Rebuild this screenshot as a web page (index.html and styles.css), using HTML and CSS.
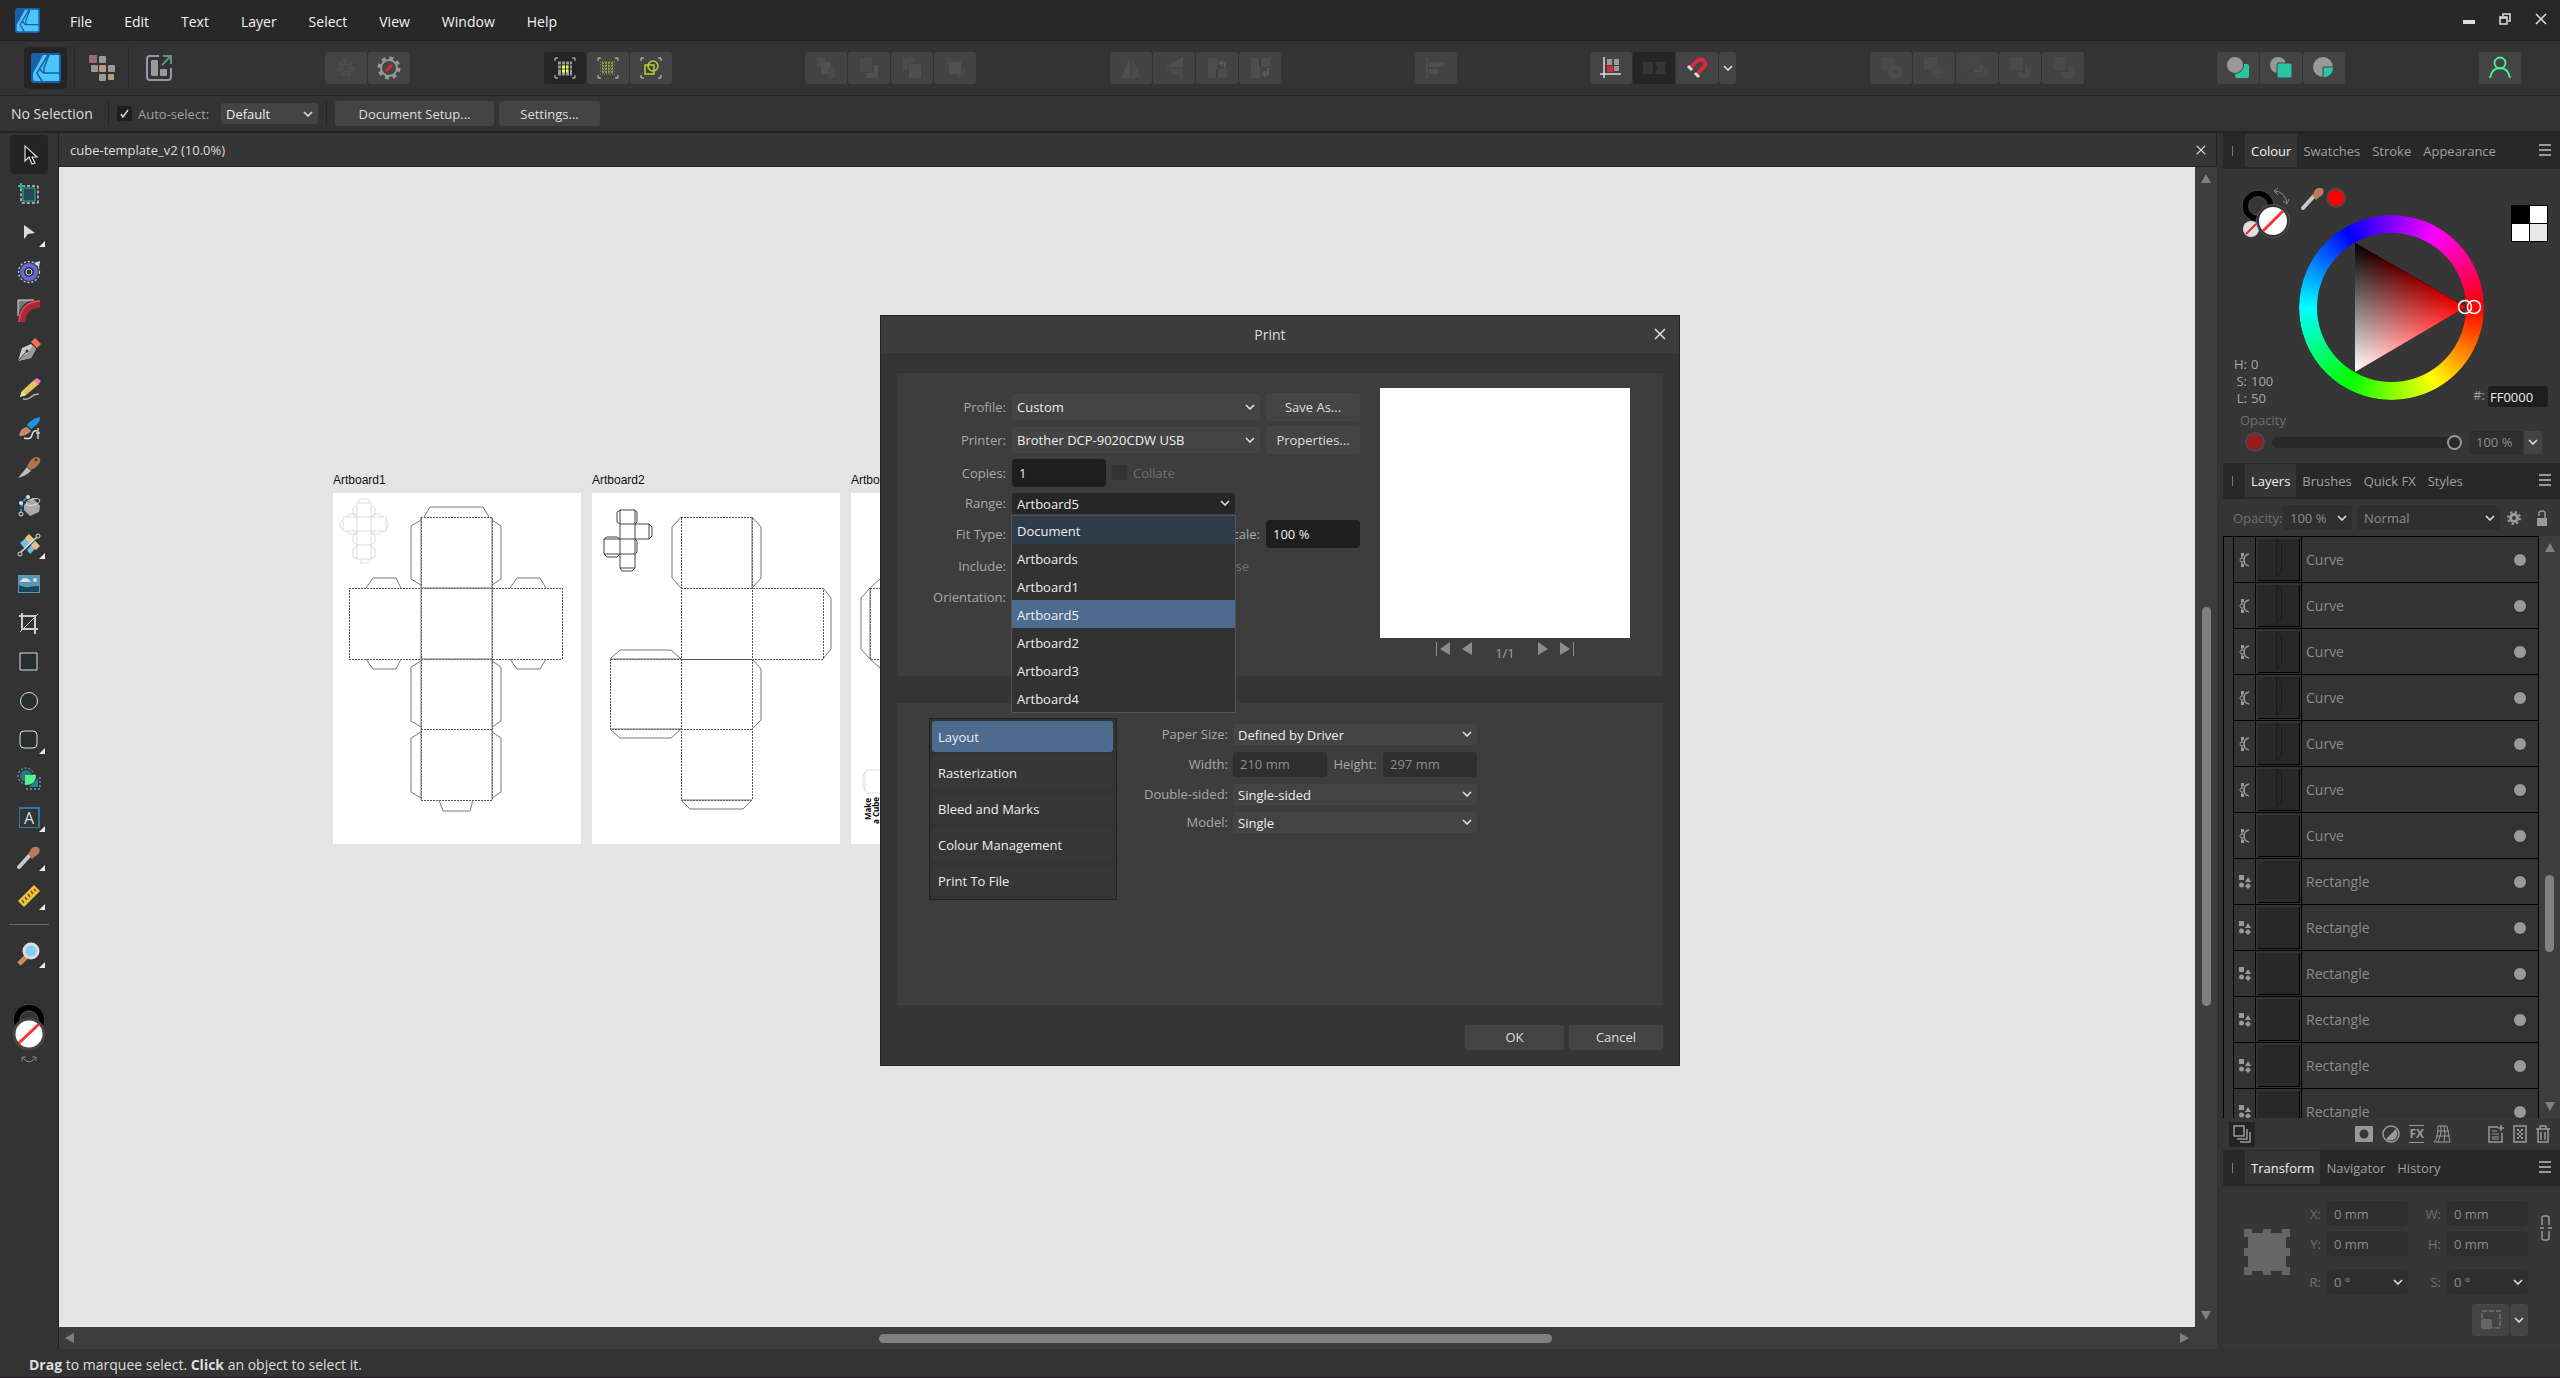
FILE: index.html
```html
<!DOCTYPE html>
<html lang="en">
<head>
  <meta charset="UTF-8" />
  <meta name="viewport" content="width=device-width, initial-scale=1" />
  <title>cube-template_v2 - Print</title>
  <link rel="stylesheet" href="styles.css">
</head>
<body>

  <!-- shared icons -->
  <svg class="defs" aria-hidden="true">
    <symbol id="logo" viewBox="0 0 30 30">
      <rect width="30" height="30" rx="3" fill="#1b5fa9"/>
      <path d="M12 2h15q1 0 1 1v24q0 1-1 1H4q-2 0-2-2v-6z" fill="#4ac6fb"/>
      <path d="M2 2h9L2 19z" fill="#1b5fa9"/>
      <path d="M17 2 6 20l5 8M9 16l3 4M12 20h16M18 2l-5 13v5" fill="none" stroke="#1b5fa9" stroke-width="1.500"/>
    </symbol>
    <symbol id="dropper" viewBox="0 0 24 24">
      <path d="M2 22 13 10" stroke="#c9c9c9" stroke-width="4" stroke-linecap="round"/>
      <path d="M11 9q2-2 3-5 4-4 8-1 2 4-2 7-3 2-5 4z" fill="#bb7a5b"/>
    </symbol>
    <symbol id="curve" viewBox="0 0 14 14">
      <path d="M4 1v12M11 1Q6 2 6 7t5 6M4 7h3" fill="none" stroke="#999" stroke-width="1.400"/>
      <path d="M3 0h3v3H3zM3 11h3v3H3z" fill="#999"/>
      <circle cx="4" cy="7" r="2" fill="#333" stroke="#999"/>
    </symbol>
    <symbol id="shapes" viewBox="0 0 14 14">
      <path d="M1 0h5v5H1zM10 2l3 5H7z" fill="#999"/>
      <circle cx="3.500" cy="10" r="2.500" fill="#999"/>
      <path d="m10 8 3 3-3 3-3-3z" fill="#999"/>
    </symbol>
    <symbol id="close" viewBox="0 0 12 12">
      <path d="m1 1 10 10M11 1 1 11" stroke="#e0e0e0" stroke-width="1.500"/>
    </symbol>
    <symbol id="menu" viewBox="0 0 12 12">
      <path d="M0 1h12M0 6h12M0 11h12" stroke="#999" stroke-width="2"/>
    </symbol>
    <symbol id="chev" viewBox="0 0 10 6">
      <path d="m1 1 4 4 4-4" fill="none" stroke="#ddd" stroke-width="1.600"/>
    </symbol>
    <symbol id="flapright" viewBox="0 0 42 42">
      <path d="M18 0v39l5-5V5z" fill="none" stroke="#1b1b1b"/>
    </symbol>
  </svg>

  <header class="menubar">
    <svg class="app-logo"><use href="#logo"/></svg>
    <nav class="menus">
      <a href="#">File</a>
      <a href="#">Edit</a>
      <a href="#">Text</a>
      <a href="#">Layer</a>
      <a href="#">Select</a>
      <a href="#">View</a>
      <a href="#">Window</a>
      <a href="#">Help</a>
    </nav>
    <div class="window-buttons">
      <button aria-label="Minimise"><svg width="12" height="12"><path d="M0 9h12" stroke="#ddd" stroke-width="4"/></svg></button>
      <button aria-label="Restore"><svg width="12" height="12" fill="none" stroke="#ddd" stroke-width="1.500"><path d="M1 4h7v7H1zM1 5h7M4 3V1h7v7H9M4 1h7"/></svg></button>
      <button aria-label="Close"><svg width="12" height="12"><use href="#close"/></svg></button>
    </div>
  </header>

  <div class="toolbar">
    <div class="personas">
      <button class="active" aria-label="Designer"><svg width="30" height="30"><use href="#logo"/></svg></button>
      <button aria-label="Pixel">
        <svg width="26" height="26">
          <rect width="8" height="8" rx="1" fill="#9d6b70"/><rect x="10" y="1" width="7" height="7" rx="1" fill="#999"/>
          <rect x="2" y="10" width="7" height="7" rx="1" fill="#999"/><rect x="10" y="10" width="7" height="7" rx="1" fill="#b79b7c"/><rect x="19" y="10" width="7" height="7" rx="1" fill="#999"/>
          <rect x="10" y="19" width="7" height="7" rx="1" fill="#999"/><rect x="19" y="19" width="6" height="6" rx="1" fill="#b0a379"/>
        </svg>
      </button>
      <button aria-label="Export">
        <svg width="26" height="26">
          <path d="M13 1H4Q1 1 1 4v18q0 3 3 3h18q3 0 3-3v-9" fill="none" stroke="#9295b3" stroke-width="2"/>
          <rect x="5" y="5" width="7" height="16" rx="1" fill="#999"/><rect x="14" y="14" width="7" height="7" rx="1" fill="#999"/>
          <path d="m16 10 8-8M17 1h8v8" fill="none" stroke="#5e9485" stroke-width="2"/>
        </svg>
      </button>
    </div>

    <div class="groups">
      <div class="group">
        <button aria-label="Defaults"><svg width="24" height="24" fill="none" stroke="#4d4d4d"><circle cx="12" cy="12" r="7" stroke-width="4" stroke-dasharray="4 2"/><circle cx="12" cy="12" r="4" stroke-width="2"/></svg></button>
        <button aria-label="Revert defaults"><svg width="24" height="24" fill="none" stroke="#999"><circle cx="12" cy="12" r="8" stroke-width="2"/><circle cx="12" cy="12" r="10" stroke-width="3" stroke-dasharray="4 3.854"/><path d="m9 15 6-6" stroke="#e0263f" stroke-width="3"/></svg></button>
      </div>
      <div class="group">
        <button class="on" aria-label="Snap to grid"><svg width="22" height="22" fill="none"><path d="M1 4V1h3M18 1h3v3M21 18v3h-3M4 21H1v-3" stroke="#ccc"/><path d="M4 6h14M4 10h14M4 14h14M4 17h14" stroke="#999" stroke-width="3" stroke-dasharray="3 1"/><path d="M8 10h6M8 14h6" stroke="#e6ff2e" stroke-width="3" stroke-dasharray="3 1"/></svg></button>
        <button aria-label="Pixel alignment"><svg width="22" height="22" fill="none"><path d="M1 4V1h3M18 1h3v3M21 18v3h-3M4 21H1v-3" stroke="#ccc"/><path d="M3 5h16M3 8h16M3 11h16M3 14h16M3 17h16" stroke="#888" stroke-width="1" stroke-dasharray="1 1"/><path d="M5 6h12M5 9h12M5 12h12M5 15h12" stroke="#c7e12d" stroke-dasharray="2 1"/></svg></button>
        <button aria-label="Move by whole pixels"><svg width="22" height="22" fill="none"><path d="M1 4V1h3M18 1h3v3M21 18v3h-3M4 21H1v-3" stroke="#ccc"/><path d="M5 8h9v9H5z" stroke="#b8cf30" stroke-width="1.500"/><circle cx="13" cy="9" r="5" stroke="#b8cf30" stroke-width="1.500"/></svg></button>
      </div>
      <div class="group dim">
        <button aria-label="Move to back"><svg width="22" height="22"><path d="M2 1h8v8H2z" fill="#4b4b4b"/><path d="M6 5h10v6h-3v6H6z" fill="#515151"/><path d="M13 12h7v9h-7z" fill="#4b4b4b"/></svg></button>
        <button aria-label="Back one"><svg width="22" height="22"><path d="M2 1h12v14H2z" fill="#4b4b4b"/><path d="M16 8h4v13H9v-5h7z" fill="#515151"/></svg></button>
        <button aria-label="Forward one"><svg width="22" height="22"><path d="M2 1h12v5H7v7H2z" fill="#4b4b4b"/><path d="M8 7h12v14H8z" fill="#505050"/></svg></button>
        <button aria-label="Move to front"><svg width="22" height="22"><path d="M2 1h7v8H2zM14 12h7v9h-7z" fill="#484848"/><path d="M5 5h12v12H5z" fill="#515151"/></svg></button>
      </div>
      <div class="group dim">
        <button aria-label="Flip horizontal"><svg width="22" height="22"><path d="M10 1v20H1z" fill="#505050"/><path d="M12 1v20h9z" fill="#4b4b4b"/></svg></button>
        <button aria-label="Flip vertical"><svg width="22" height="22"><path d="M20 0v10H2z" fill="#505050"/><path d="M20 21v-9H2z" fill="#4b4b4b"/></svg></button>
        <button aria-label="Rotate left"><svg width="22" height="22"><path d="M2 1h9v20H2zM12 12h9v9h-9z" fill="#4d4d4d"/><path d="M11 12v9" stroke="#333"/><path d="M19 11V6h-5m3-3-3 3 3 3" fill="none" stroke="#5d5d5d" stroke-width="1.500"/></svg></button>
        <button aria-label="Rotate right"><svg width="22" height="22"><path d="M2 1h9v20H2zM12 1h9v9h-9z" fill="#4d4d4d"/><path d="M11 1v9" stroke="#333"/><path d="M19 11v6h-5m3-3-3 3 3 3" fill="none" stroke="#5d5d5d" stroke-width="1.500"/></svg></button>
      </div>
      <div class="group dim">
        <button aria-label="Alignment"><svg width="22" height="22"><path d="M2 1v20" stroke="#4d4d4d" stroke-width="2"/><path d="M4 5h15v5H4zM4 12h10v5H4z" fill="#505050"/></svg></button>
      </div>
      <div class="group">
        <button aria-label="Show grid"><svg width="22" height="22"><path d="M7 2h5v6H7zM14 2h5v6h-5zM14 9h5v5h-5z" fill="#999"/><path d="M7 9h6v6H7z" fill="#e0263f"/><path d="M4 0v21M0 17h21" stroke="#ddd" stroke-width="1.500"/></svg></button>
        <button class="on" aria-label="Preview"><svg width="22" height="12"><path d="M0 0h10v12H0zM11 0h11v12H11l4-6z" fill="#363636"/></svg></button>
        <button class="joined" aria-label="Snapping"><svg width="22" height="22" fill="none"><path d="m5 10 6-6q4-3 7 0 3 4-1 7l-5 5" stroke="#e0263f" stroke-width="4"/><path d="m2 9 4 4M9 16l4 4" stroke="#ddd" stroke-width="3"/></svg></button>
        <button class="thin" aria-label="Snapping options"><svg width="10" height="6"><use href="#chev"/></svg></button>
      </div>
      <div class="group dim">
        <button aria-label="Add"><svg width="24" height="24"><path d="M2 1h13v13H2z" fill="#494949"/><circle cx="16" cy="16" r="7" fill="#4c4c4c"/><path d="M16 13v6M13 16h6" stroke="#424242"/></svg></button>
        <button aria-label="Subtract"><svg width="24" height="24"><path d="M2 1h13v13H2z" fill="#4b4b4b"/><circle cx="16" cy="16" r="7" fill="#484848"/><path d="M13 16h6" stroke="#515151"/></svg></button>
        <button aria-label="Intersect"><svg width="24" height="24"><path d="M2 1h13v13H2z" fill="#464646"/><circle cx="16" cy="16" r="7" fill="#474747"/><path d="M16 9v6H9" fill="none" stroke="#505050" stroke-width="2"/></svg></button>
        <button aria-label="Xor"><svg width="24" height="24"><path d="M2 1h13v13H2z" fill="#4a4a4a"/><circle cx="16" cy="16" r="7" fill="#4b4b4b"/><path d="M16 9v6H9" fill="none" stroke="#404040" stroke-width="2"/></svg></button>
        <button aria-label="Divide"><svg width="24" height="24"><path d="M2 1h13v13H2z" fill="#4a4a4a"/><circle cx="16" cy="16" r="7" fill="#4a4a4a"/><path d="M16 9v6H9" fill="none" stroke="#404040" stroke-width="2"/></svg></button>
      </div>
      <div class="group">
        <button aria-label="Insert behind"><svg width="24" height="24"><rect x="9" y="8" width="14" height="14" rx="2" fill="#2bc4a4"/><circle cx="9" cy="9" r="8.500" fill="#999" stroke="#444"/></svg></button>
        <button aria-label="Insert in front"><svg width="24" height="24"><circle cx="9" cy="9" r="8" fill="#999"/><rect x="8" y="7" width="15" height="15" rx="2" fill="#2bc4a4" stroke="#444"/></svg></button>
        <button aria-label="Insert inside"><svg width="24" height="24"><circle cx="11" cy="11" r="10" fill="#999"/><path d="M11 22V11h11q-1 10-11 11z" fill="#2bc4a4" stroke="#444"/></svg></button>
      </div>
      <div class="group">
        <button aria-label="Account"><svg width="24" height="24" fill="none" stroke="#4af295" stroke-width="1.800"><circle cx="12" cy="7" r="5.500"/><path d="M2 22q2-10 10-10t10 10"/></svg></button>
      </div>
    </div>
  </div>

  <div class="context">
    <span class="selection">No Selection</span>
    <span class="sep"></span>
    <input type="checkbox" id="autoSelect" checked>
    <label for="autoSelect">Auto-select:</label>
    <select class="auto" aria-label="Auto-select mode"><option>Default</option></select>
    <span class="sep"></span>
    <button class="btn setup">Document Setup...</button>
    <button class="btn settings">Settings...</button>
  </div>

  <div class="workspace">
    <aside class="tools">
      <button class="active" aria-label="Move"><svg width="24" height="24"><path d="M8 3v15l4-4 3 7 3-1-3-6h5z" fill="#111" stroke="#ddd" stroke-width="1.200"/></svg></button>
      <button aria-label="Artboard"><svg width="24" height="24" fill="none"><rect x="4" y="4" width="17" height="17" rx="1" stroke="#ccc" stroke-width="1.500" stroke-dasharray="3 2"/><path d="M6 6h12v13H6z" fill="#1f4a56" stroke="#2bb59a"/><path d="M1 4h6M4 1v6" stroke="#2bb59a" stroke-width="2"/></svg></button>
      <button class="more" aria-label="Node"><svg width="24" height="24"><path d="m7 4 11 8-7 1-4 5z" fill="#ddd"/></svg></button>
      <button aria-label="Contour"><svg width="24" height="24" fill="none"><circle cx="12" cy="12" r="7" stroke="#5e6bdb" stroke-width="4"/><circle cx="12" cy="12" r="3" stroke="#ddd"/><circle cx="12" cy="12" r="10.500" stroke="#ccc" stroke-width="1.300" stroke-dasharray="2 2"/><path d="m17 3 6-2-1 6z" fill="#ddd"/></svg></button>
      <button aria-label="Corner"><svg width="24" height="24" fill="none"><path d="M1 1h16Q4 3 1 17z" fill="#777"/><path d="M1 17V1h16" stroke="#ddd"/><path d="M5 23Q6 6 23 5" stroke="#a8273a" stroke-width="7"/><path d="M2 23Q3 3 23 2" stroke="#f04a5c" stroke-width="1.500"/></svg></button>
      <button aria-label="Pen"><svg width="24" height="24"><path d="M1 23 5 10l9-4 5 5-5 9z" fill="#ccc"/><path d="m1 23 13-3 5-9-3-3-6 7z" fill="#999"/><path d="m1 23 8-9" stroke="#333"/><circle cx="10" cy="13" r="1.500" fill="#333"/><path d="m14 4 4-4 6 6-4 4z" fill="#ff6a55"/></svg></button>
      <button aria-label="Pencil"><svg width="24" height="24" fill="none"><path d="M6 22q5 1 8-2t8-3" stroke="#aaa" stroke-width="1.500"/><path d="m3 20 2-6L17 3l5 4L9 18z" fill="#e2c45a"/><path d="m3 20 2-6 4 4z" fill="#f0dca6"/><path d="m17 3 3-2 4 3-3 4z" fill="#ee7fc8"/></svg></button>
      <button aria-label="Vector brush"><svg width="24" height="24" fill="none"><path d="M7 22q7 2 8-3t5-4" stroke="#ddd" stroke-width="1.500"/><path d="M21 12v11M19 17h4" stroke="#ccc" stroke-width="1.500"/><path d="M10 9Q15 2 23 1q1 6-9 12z" fill="#1d94e0"/><path d="M2 20q1-8 8-9l4 4q-4 5-12 5z" fill="#c18b72"/></svg></button>
      <button aria-label="Knife"><svg width="24" height="24"><path d="M1 23 10 12l4 4q-5 5-13 7z" fill="#bbb"/><path d="M10 11q5-10 11-9 4 2 1 7-3 4-8 6z" fill="#b2714f"/><circle cx="19" cy="5" r="1.300" fill="#333"/></svg></button>
      <button aria-label="Fill"><svg width="24" height="24" fill="none"><path d="M4 19q0-14 8-16" stroke="#1d8fd6" stroke-width="2" stroke-dasharray="4 2"/><path d="m7 11 9-7 7 8-1 6-9 4-6-6z" fill="#aaa"/><ellipse cx="16" cy="8" rx="7" ry="3" transform="rotate(-15 16 8)" stroke="#ddd"/><circle cx="4" cy="20" r="2" stroke="#ddd"/><circle cx="4" cy="9" r="2" fill="#ddd"/><circle cx="11" cy="3" r="2" fill="#ddd"/></svg></button>
      <button class="more" aria-label="Gradient"><svg width="24" height="24" fill="none"><path d="m3 10 9-8 5 5-9 9zM10 17l8-9 4 4-9 9z" fill="#74bfe0"/><path d="m8 5 4-4 5 5-4 5zM14 12l4-4 5 5-4 4z" fill="#e7bf8c"/><path d="m3 20 17-16" stroke="#ddd" stroke-width="1.500"/><circle cx="3" cy="21" r="2" stroke="#ddd" fill="#333"/><circle cx="21" cy="3" r="2" stroke="#ddd" fill="#333"/></svg></button>
      <button aria-label="Place image"><svg width="24" height="24"><rect x="1" y="3" width="22" height="18" fill="#5b97b8"/><path d="M2 13q6 3 10 2t10-1v6H2z" fill="#17485a"/><path d="M3 10q2-4 5-4t6 4z" fill="#ddd"/><circle cx="18" cy="8" r="2" fill="#ddd"/></svg></button>
      <button aria-label="Crop"><svg width="24" height="24" fill="none" stroke="#ccc" stroke-width="2"><path d="M5 2v16h16M2 5h16v18"/><path d="M3 21 21 3" stroke-width="1"/></svg></button>
      <button aria-label="Rectangle"><svg width="24" height="24"><path d="M3 3h17v17H3z" fill="#272e30" stroke="#ddd"/></svg></button>
      <button aria-label="Ellipse"><svg width="24" height="24"><circle cx="12" cy="12" r="8.500" fill="#272e30" stroke="#ddd"/></svg></button>
      <button class="more" aria-label="Rounded rectangle"><svg width="24" height="24"><rect x="3" y="3" width="17" height="17" rx="4" fill="#272e30" stroke="#ddd"/></svg></button>
      <button aria-label="Shape builder"><svg width="24" height="24" fill="none"><circle cx="9" cy="9" r="6" fill="#2b7582"/><path d="M21 11v9h-9z" fill="#2b8091"/><path d="M8 8h11q0 10-11 10z" fill="#53f58f"/><circle cx="9" cy="9" r="8" stroke="#7fd0ee" stroke-dasharray="2 2"/><path d="M9 22h14V8" stroke="#7fd0ee" stroke-dasharray="2 2"/></svg></button>
      <button class="more text-tool" aria-label="Text">A</button>
      <button class="more" aria-label="Colour picker"><svg width="24" height="24"><use href="#dropper"/></svg></button>
      <button class="more" aria-label="Measure"><svg width="24" height="24"><path d="M1 17 17 1l6 6L7 23z" fill="#efc43c"/><path d="m5 16 2 3M8 13l2 3M11 10l2 3M14 7l2 3M17 5l2 2" stroke="#6b5010" stroke-width="1.500"/></svg></button>
      <hr>
      <button class="more" aria-label="Zoom"><svg width="24" height="24"><path d="m2 22 7-7" stroke="#c98f62" stroke-width="5"/><circle cx="14" cy="9" r="7" fill="#86cdf6" stroke="#ddd" stroke-width="3"/></svg></button>
      <svg class="tool-colours" width="38" height="64" fill="none">
        <circle cx="19" cy="19" r="13" stroke="#000" stroke-width="7"/><circle cx="19" cy="19" r="16" stroke="#555"/><circle cx="19" cy="19" r="9" stroke="#555"/>
        <circle cx="19" cy="33" r="15" fill="#fff" stroke="#444" stroke-width="3"/><path d="m9 42 20-19" stroke="#f33" stroke-width="3"/>
        <path d="M13 57q6 8 12 0M12 60v-4h4M22 56h4v4" stroke="#888"/>
      </svg>
    </aside>

    <main class="document">
      <div class="doc-tab">
        <span>cube-template_v2 (10.0%)</span>
        <button aria-label="Close document"><svg width="10" height="10"><use href="#close"/></svg></button>
      </div>
      <div class="canvas">
        <figure class="artboard">
          <figcaption>Artboard1</figcaption>
          <svg viewBox="0 0 248 351">
            <g class="fold">
              <path d="M88 24h71v283H88zM16 95h213v71H16zM88 236h71"/>
            </g>
            <g class="cut">
              <path d="M91 24l6-10h53l6 10M88 27l-10 6v53l10 6M159 27l9 6v53l-9 6"/>
              <path d="M33 95l7-10h23l5 10M177 95l7-10h23l6 10M33 166l7 10h23l5-10M177 166l7 10h23l6-10"/>
              <path d="M88 168l-10 6v54l10 6M159 168l9 6v54l-9 6M88 239l-10 6v54l10 6M159 239l9 6v54l-9 6M106 307l4 11h27l3-11"/>
              <path d="M88 95h71M88 166h71M88 24v283M159 24v283"/>
            </g>
            <path class="mini-light" d="M24 10h14v56H24zM10 24h43v14H10zM24 52h14M25 10l2-4h8l2 4M24 12l-4 3v6l4 3M38 12l4 3v6l-4 3M10 27l-3 2v5l3 2M53 27l2 2v5l-2 2M14 24l2-3h6l2 3M39 24l2-3h6l2 3M14 38l2 3h6l2-3M39 38l2 3h6l2-3M24 40l-4 3v6l4 3M38 40l4 3v6l-4 3M24 53l-4 3v8l4 2M38 53l4 3v8l-4 2M27 66l1 4h6l2-4"/>
          </svg>
        </figure>
        <figure class="artboard">
          <figcaption>Artboard2</figcaption>
          <svg viewBox="0 0 248 351">
            <g class="fold">
              <path d="M89 24h71v283H89zM89 95h142v71H18M18 166v70h142M89 166h71"/>
            </g>
            <g class="cut">
              <path d="M89 24l-9 10v51l9 10M160 24l9 10v51l-9 10M231 95l8 10v51l-8 10M160 166l9 10v51l-9 9"/>
              <path d="M18 166l10-9h51l10 9M18 236l10 9h51l10-9M89 307l9 9h53l9-9"/>
              <path d="M18 166h71M18 236h71M160 24v71M89 307h71"/>
            </g>
            <path class="mini" d="M28 17h15v58H28zM28 31h29v15H12M12 46v15h31M29 17l-4 2v10l3 2M42 17l3 2v10l-2 2M57 31l3 3v9l-3 3M12 46l3-2h10l3 2M12 61l3 3h10l3-3M43 46l2 2v11l-2 2M28 75l2 3h10l3-3"/>
          </svg>
        </figure>
        <figure class="artboard">
          <figcaption>Artboard3</figcaption>
          <svg viewBox="0 0 248 351">
            <path class="fold" d="M19 95h71v71H19z"/>
            <path class="cut" d="M19 95l-9 10v51l9 10zM19 95l10-9h51l10 9M19 166l10 9h51l10-9"/>
            <path class="mini-light" d="M30 277H16l-4 5v12l4 6h14M14 279v19"/>
            <text class="cube-text" transform="rotate(-90)" x="-327" y="20">Make</text>
            <text class="cube-text" transform="rotate(-90)" x="-331" y="28">a Cube</text>
          </svg>
        </figure>
      </div>
      <div class="scroll vertical">
        <i class="arrow up"></i><span class="v-before"></span><span class="thumb v-thumb"></span><span class="v-after"></span><i class="arrow down"></i>
      </div>
      <div class="scroll horizontal">
        <i class="arrow left"></i><span class="h-before"></span><span class="thumb h-thumb"></span><span class="h-after"></span><i class="arrow right"></i>
      </div>
    </main>

    <aside class="panels">
      <div class="tabs">
        <i class="grip"></i>
        <button class="active">Colour</button><button>Swatches</button><button>Stroke</button><button>Appearance</button>
        <svg class="tab-menu"><use href="#menu"/></svg>
      </div>
      <section class="colour">
        <div class="colour-main">
          <div class="colour-left">
            <svg width="52" height="52" fill="none">
              <circle cx="19" cy="20" r="13" stroke="#000" stroke-width="6"/><circle cx="19" cy="20" r="16" stroke="#4a4a4a"/><circle cx="19" cy="20" r="9" stroke="#4a4a4a"/>
              <circle cx="12" cy="43" r="8" fill="#ddd"/><path d="m7 48 10-10" stroke="#e0263f" stroke-width="2"/>
              <circle cx="34" cy="35" r="15" fill="#fff" stroke="#333" stroke-width="2"/><circle cx="34" cy="35" r="16.500" stroke="#555"/><path d="m24 45 20-20" stroke="#f33" stroke-width="3"/>
              <path d="M36 5q10 1 12 12M39 2l-4 3 4 4M44 15l4 3 2-5" stroke="#888"/>
            </svg>
            <dl class="hsl">
              <dt>H:</dt><dd>0</dd>
              <dt>S:</dt><dd>100</dd>
              <dt>L:</dt><dd>50</dd>
            </dl>
          </div>
          <div class="colour-mid">
            <div class="picker">
              <svg width="24" height="24"><use href="#dropper"/></svg>
              <span class="dot"></span>
            </div>
            <div class="wheel">
              <div class="ring"></div>
              <svg class="triangle" width="185" height="185">
                <defs>
                  <linearGradient id="toRed" gradientUnits="userSpaceOnUse" x1="56" y1="92" x2="167" y2="92"><stop offset="0" stop-color="#000"/><stop offset="1" stop-color="#f00"/></linearGradient>
                  <linearGradient id="toWhite" gradientUnits="userSpaceOnUse" x1="111" y1="60" x2="56" y2="156"><stop offset="0" stop-color="#000"/><stop offset="1" stop-color="#fff"/></linearGradient>
                </defs>
                <g class="mix">
                  <path d="M56 28v129l111-65z" fill="url(#toRed)"/>
                  <path class="light" d="M56 28v129l111-65z" fill="url(#toWhite)"/>
                </g>
                <circle cx="166" cy="92" r="6.500" fill="none" stroke="#fff" stroke-width="1.500"/>
                <circle cx="175" cy="92" r="6.500" fill="none" stroke="#fff" stroke-width="1.500"/>
              </svg>
            </div>
          </div>
          <div class="colour-right">
            <div class="palette"><i class="black"></i><i></i><i></i><i class="grey"></i></div>
            <div class="hex"><label for="hex">#:</label><input type="text" id="hex" value="FF0000"></div>
          </div>
        </div>
        <label class="opacity-label" for="opacity">Opacity</label>
        <div class="opacity-row">
          <span class="dot dark"></span>
          <input type="range" id="opacity" value="100">
          <div class="split"><input type="text" value="100 %" aria-label="Opacity value"><button aria-label="Opacity list"><svg width="10" height="6"><use href="#chev"/></svg></button></div>
        </div>
      </section>

      <div class="tabs">
        <i class="grip"></i>
        <button class="active">Layers</button><button>Brushes</button><button>Quick FX</button><button>Styles</button>
        <svg class="tab-menu"><use href="#menu"/></svg>
      </div>
      <div class="layer-options">
        <label for="layerOpacity">Opacity:</label>
        <select id="layerOpacity" class="field pct"><option>100 %</option></select>
        <select class="field blend" aria-label="Blend mode"><option>Normal</option></select>
        <svg class="gear" width="14" height="14" fill="none" stroke="#999"><circle cx="7" cy="7" r="3.500" stroke-width="3"/><circle cx="7" cy="7" r="6" stroke-width="2" stroke-dasharray="2.300 2.412"/></svg>
        <svg width="10" height="16"><path d="M0 8h10v8H0z" fill="#999"/><path d="M2 6V3q0-2 3-2t3 2v5" fill="none" stroke="#999" stroke-width="1.500"/></svg>
      </div>
      <div class="layers">
        <ul class="layer-list">
          <li><svg class="kind"><use href="#curve"/></svg><span class="preview"><svg><use href="#flapright"/></svg></span><span class="name">Curve</span><i></i></li>
          <li><svg class="kind"><use href="#curve"/></svg><span class="preview"><svg><use href="#flapright"/></svg></span><span class="name">Curve</span><i></i></li>
          <li><svg class="kind"><use href="#curve"/></svg><span class="preview"><svg><use href="#flapright"/></svg></span><span class="name">Curve</span><i></i></li>
          <li><svg class="kind"><use href="#curve"/></svg><span class="preview"><svg><use href="#flapright"/></svg></span><span class="name">Curve</span><i></i></li>
          <li><svg class="kind"><use href="#curve"/></svg><span class="preview"><svg><use href="#flapright"/></svg></span><span class="name">Curve</span><i></i></li>
          <li><svg class="kind"><use href="#curve"/></svg><span class="preview"><svg><use href="#flapright"/></svg></span><span class="name">Curve</span><i></i></li>
          <li><svg class="kind"><use href="#curve"/></svg><span class="preview"></span><span class="name">Curve</span><i></i></li>
          <li><svg class="kind"><use href="#shapes"/></svg><span class="preview"></span><span class="name">Rectangle</span><i></i></li>
          <li><svg class="kind"><use href="#shapes"/></svg><span class="preview"></span><span class="name">Rectangle</span><i></i></li>
          <li><svg class="kind"><use href="#shapes"/></svg><span class="preview"></span><span class="name">Rectangle</span><i></i></li>
          <li><svg class="kind"><use href="#shapes"/></svg><span class="preview"></span><span class="name">Rectangle</span><i></i></li>
          <li><svg class="kind"><use href="#shapes"/></svg><span class="preview"></span><span class="name">Rectangle</span><i></i></li>
          <li><svg class="kind"><use href="#shapes"/></svg><span class="preview"></span><span class="name">Rectangle</span><i></i></li>
        </ul>
        <div class="scroll layer-scroll">
          <i class="arrow up"></i><span class="l-before"></span><span class="thumb l-thumb"></span><span class="l-after"></span><i class="arrow down"></i>
        </div>
      </div>
      <div class="layer-actions">
        <button class="boxed" aria-label="Edit all layers"><svg width="18" height="18" fill="none" stroke="#999"><path d="M1 1h10v10H1z" stroke-width="1.500"/><path d="M14 4v10H4M17 7v10H7" stroke-width="1.500"/></svg></button>
        <button class="push" aria-label="Mask"><svg width="18" height="18"><rect y="1" width="18" height="16" rx="1" fill="#999"/><circle cx="9" cy="9" r="4.500" fill="#363636"/></svg></button>
        <button aria-label="Adjustment"><svg width="18" height="18"><circle cx="9" cy="9" r="8" fill="none" stroke="#999" stroke-width="1.500"/><path d="M4 14 14 4q3 6-1 10-5 3-9 0z" fill="#999"/></svg></button>
        <button class="fx" aria-label="Effects">FX</button>
        <button aria-label="Live filter"><svg width="18" height="18" fill="none" stroke="#999"><path d="M5 1h9l3 16H1q4-3 4-16zM4 6h12M3 11h14M8 1q1 8-3 16M11 1q2 8 0 16"/></svg></button>
        <button class="page" aria-label="Add layer"><svg width="16" height="18" fill="none" stroke="#999"><path d="M10 2H1v15h13V8" stroke-width="1.500"/><path d="M4 6h5M4 9h7M4 12h7M4 14h7" /><path d="M13 0v6M10 3h6" stroke-width="1.500"/></svg></button>
        <button aria-label="Add pixel layer"><svg width="14" height="18" fill="none" stroke="#999"><path d="M1 1h12v16H1z" stroke-width="1.500"/><path d="M5 4v10M9 4v10" stroke-width="2" stroke-dasharray="2 2"/><path d="M7 6v8" stroke-width="2" stroke-dasharray="2 2"/></svg></button>
        <button aria-label="Delete"><svg width="14" height="18" fill="none" stroke="#999" stroke-width="1.500"><path d="M0 4h14M4 4V1h6v3M2 4v13h10V4M5 7v8M9 7v8"/></svg></button>
      </div>

      <div class="tabs">
        <i class="grip"></i>
        <button class="active">Transform</button><button>Navigator</button><button>History</button>
        <svg class="tab-menu"><use href="#menu"/></svg>
      </div>
      <section class="transform">
        <svg class="anchor" width="46" height="46" fill="#666"><path d="M4 4h38v38H4z"/><path d="M0 0h8v8H0zM19 0h8v8h-8zM38 0h8v8h-8zM0 19h8v8H0zM38 19h8v8h-8zM0 38h8v8H0zM19 38h8v8h-8zM38 38h8v8h-8z"/></svg>
        <div class="fields">
          <label for="tx">X:</label><input class="field" type="text" id="tx" value="0 mm">
          <label for="tw">W:</label><input class="field" type="text" id="tw" value="0 mm">
          <label for="ty">Y:</label><input class="field" type="text" id="ty" value="0 mm">
          <label for="th">H:</label><input class="field" type="text" id="th" value="0 mm">
          <label for="tr" class="gap">R:</label><select class="field gap" id="tr"><option>0 °</option></select>
          <label for="ts" class="gap">S:</label><select class="field gap" id="ts"><option>0 °</option></select>
          <div class="scale-split">
            <button aria-label="Scale options"><svg width="20" height="20" fill="none" stroke="#666"><path d="M1 8V1h18v17h-8" stroke-width="2" stroke-dasharray="5 2"/><rect y="9" width="11" height="10" rx="2" fill="#666" stroke="none"/></svg></button>
            <button class="thin" aria-label="Scale list"><svg width="10" height="6"><use href="#chev"/></svg></button>
          </div>
        </div>
        <svg class="link" width="12" height="26" fill="none" stroke="#999" stroke-width="1.500"><path d="M2 10V3q0-2 2-2h3q2 0 2 2v7M2 16v7q0 2 2 2h3q2 0 2-2v-7M0 13h4M8 13h4"/></svg>
      </section>
    </aside>
  </div>

  <footer class="status"><p><b>Drag</b> to marquee select. <b>Click</b> an object to select it.</p></footer>

  <!-- print dialog -->
  <div class="overlay">
    <form class="dialog" role="dialog" aria-labelledby="printTitle">
      <div class="dialog-title">
        <h2 id="printTitle">Print</h2>
        <button type="button" aria-label="Close"><svg width="12" height="12"><use href="#close"/></svg></button>
      </div>

      <div class="box printer-box">
        <div class="print-form">
          <label for="profile">Profile:</label>
          <select id="profile"><option>Custom</option></select>
          <button type="button" class="btn side">Save As...</button>

          <label for="printer">Printer:</label>
          <select id="printer"><option>Brother DCP-9020CDW USB</option></select>
          <button type="button" class="btn side">Properties...</button>

          <label for="copies">Copies:</label>
          <div class="copies">
            <input type="text" class="dark-input" id="copies" value="1">
            <input type="checkbox" id="collate" disabled><label for="collate" class="off">Collate</label>
          </div>

          <label for="range">Range:</label>
          <div class="range">
            <select id="range"><option>Artboard5</option></select>
            <ul class="range-list">
              <li class="hover">Document</li>
              <li>Artboards</li>
              <li>Artboard1</li>
              <li class="current">Artboard5</li>
              <li>Artboard2</li>
              <li>Artboard3</li>
              <li>Artboard4</li>
            </ul>
          </div>

          <label for="fit">Fit Type:</label>
          <div class="fit">
            <select id="fit"><option>Scale</option></select>
            <label for="scale">Scale:</label>
          </div>
          <input type="text" class="dark-input side" id="scale" value="100 %">

          <span class="caption">Include:</span>
          <div class="reverse"><input type="checkbox" id="reverse" disabled><label for="reverse" class="off">Reverse</label></div>

          <span class="caption">Orientation:</span>
        </div>

        <div class="sheet">
          <div class="paper"></div>
          <div class="pager">
            <button type="button" aria-label="First"><svg width="14" height="14" fill="#8c8c8c"><path d="M0 0h1v14H0zM14 0v13L4 7z"/></svg></button>
            <button type="button" aria-label="Previous"><svg width="10" height="14" fill="#8c8c8c"><path d="M10 0v13L0 7z"/></svg></button>
            <span>1/1</span>
            <button type="button" aria-label="Next"><svg width="10" height="14" fill="#8c8c8c"><path d="M0 0v13l10-6z"/></svg></button>
            <button type="button" aria-label="Last"><svg width="14" height="14" fill="#8c8c8c"><path d="M13 0h1v14h-1zM0 0v13l10-6z"/></svg></button>
          </div>
        </div>
      </div>

      <div class="box options-box">
        <ul class="pages">
          <li class="current">Layout</li>
          <li>Rasterization</li>
          <li>Bleed and Marks</li>
          <li>Colour Management</li>
          <li>Print To File</li>
        </ul>
        <div class="layout-form">
          <label for="paper">Paper Size:</label>
          <select id="paper"><option>Defined by Driver</option></select>
          <label for="pw">Width:</label>
          <div class="size">
            <input type="text" class="field" id="pw" value="210 mm" disabled>
            <label for="ph">Height:</label>
            <input type="text" class="field" id="ph" value="297 mm" disabled>
          </div>
          <label for="duplex">Double-sided:</label>
          <select id="duplex"><option>Single-sided</option></select>
          <label for="model">Model:</label>
          <select id="model"><option>Single</option></select>
        </div>
      </div>

      <div class="dialog-buttons">
        <button type="button" class="btn ok">OK</button>
        <button type="button" class="btn cancel">Cancel</button>
      </div>
    </form>
  </div>

</body>
</html>
```

FILE: styles.css
```css
* {
  box-sizing: border-box;
}

body {
  margin: 0;
  height: 100vh;
  display: flex;
  flex-direction: column;
  overflow: hidden;
  background: #333;
  color: #ddd;
  font-family: "Open Sans", "Noto Sans", sans-serif;
  font-size: 13px;
  line-height: 18px;
}

button, input, select {
  font: inherit;
  color: inherit;
  margin: 0;
  padding: 0;
  border: none;
  background: none;
}

button {
  display: flex;
  align-items: center;
  justify-content: center;
}

ul, dl, dd, figure, h2, p {
  margin: 0;
  padding: 0;
  list-style: none;
}

.defs {
  position: absolute;
  width: 0;
  height: 0;
}

select {
  appearance: none;
  height: 21px;
  padding: 1px 24px 0 5px;
  border-radius: 3px;
  color: #eee;
  background: #444 url("data:image/svg+xml,%3Csvg xmlns='http://www.w3.org/2000/svg' width='10' height='6'%3E%3Cpath d='m1 1 4 4 4-4' fill='none' stroke='%23ddd' stroke-width='1.600'/%3E%3C/svg%3E") no-repeat right 5px center;
}

input[type="checkbox"] {
  appearance: none;
  width: 15px;
  height: 15px;
  border-radius: 2px;
  background: #222;
}

input[type="checkbox"]:checked {
  background: #1e1e1e url("data:image/svg+xml,%3Csvg xmlns='http://www.w3.org/2000/svg' width='15' height='15'%3E%3Cpath d='m4 8 2 3 5-7' fill='none' stroke='%23ddd' stroke-width='1.400'/%3E%3C/svg%3E");
}

input[type="checkbox"]:disabled {
  background: #333;
}

.btn {
  height: 25px;
  border-radius: 3px;
  background: #444;
  color: #ddd;
}

.field {
  height: 25px;
  border-radius: 4px;
  padding: 0 7px;
  background-color: #2f2f2f;
  color: #8c8c8c;
}

/* menu bar */
.menubar {
  display: flex;
  align-items: center;
  height: 41px;
  padding: 0 13px 0 15px;
  background: #282828;
  border-bottom: 1px solid #202020;
}

.app-logo {
  width: 25px;
  height: 25px;
}

.menus {
  display: flex;
  gap: 32px;
  margin-left: 30px;
  padding-top: 3px;
  font-size: 14px;
}

.menus a {
  color: #f2f2f2;
  text-decoration: none;
}

.window-buttons {
  display: flex;
  gap: 24px;
  margin-left: auto;
  padding-bottom: 2px;
}

/* main toolbar */
.toolbar {
  display: flex;
  align-items: center;
  height: 55px;
  padding: 0 39px 0 24px;
  border-bottom: 1px solid #222;
}

.personas {
  display: flex;
  gap: 7px;
}

.personas button {
  width: 45px;
  height: 42px;
}

.personas button.active {
  width: 43px;
  border-radius: 4px;
  background: #242424;
}

.personas button:nth-child(2) {
  width: 55px;
  border: solid #262626;
  border-width: 0 1px;
}

.groups {
  display: flex;
  flex: 1;
  justify-content: space-between;
  margin-left: 144px;
}

.group {
  display: flex;
  gap: 1px;
}

.group button {
  width: 42px;
  height: 32px;
  border-radius: 3px;
  background: #444;
}

.group.dim button {
  background: #434343;
}

.group button.on {
  background: #252525;
}

.group button.thin {
  width: 17px;
}

/* context bar */
.context {
  display: flex;
  align-items: center;
  height: 37px;
  padding: 0 11px;
  border-bottom: 2px solid #232323;
}

.selection {
  width: 97px;
  font-size: 14px;
}

.sep {
  width: 1px;
  height: 25px;
  background: #242424;
}

.context input {
  margin: 0 6px 0 8px;
}

.context label {
  width: 83px;
  color: #a0a0a0;
}

.auto {
  width: 97px;
  margin-right: 8px;
}

.setup {
  width: 159px;
  margin: 0 5px 0 8px;
}

.settings {
  width: 101px;
}

/* workspace */
.workspace {
  flex: 1;
  min-height: 0;
  display: flex;
}

.tools {
  width: 59px;
  padding: 2px 10px 0;
  border-right: 1px solid #222;
}

.tools button {
  position: relative;
  width: 38px;
  height: 39px;
  border-radius: 4px;
}

.tools button.active {
  background: #242424;
}

.tools button.more::after {
  content: "";
  position: absolute;
  right: 3px;
  bottom: 5px;
  border: 3px solid transparent;
  border-right-color: #eee;
  border-bottom-color: #eee;
}

.tools .text-tool {
  font-size: 16px;
  background:
    linear-gradient(#333, #333) center / 18px 18px no-repeat,
    linear-gradient(#2a78a5, #2a78a5) center / 21px 21px no-repeat;
}

.tools hr {
  width: 40px;
  height: 1px;
  margin: 9px -1px 9px;
  border: none;
  background: #666;
}

.tool-colours {
  display: block;
  margin-top: 28px;
}

.document {
  flex: 1;
  min-width: 0;
  display: grid;
  grid-template-columns: 1fr 22px;
  grid-template-rows: 34px 1fr 22px;
  background: #3d3d3d;
}

.doc-tab {
  grid-column: 1 / -1;
  display: flex;
  align-items: center;
  justify-content: space-between;
  padding: 0 10px 0 11px;
  background: #363636;
  border-bottom: 1px solid #222;
  border-right: 1px solid #222;
}

.canvas {
  display: flex;
  gap: 11px;
  padding: 304px 0 0 274px;
  overflow: hidden;
  background: #e4e4e4;
}

.artboard {
  flex: none;
  width: 248px;
}

.artboard figcaption {
  height: 22px;
  font-family: "Liberation Sans", Arial, sans-serif;
  font-size: 12px;
  color: #111;
}

.artboard svg {
  display: block;
  width: 248px;
  height: 351px;
  background: #fff;
}

.fold {
  fill: none;
  stroke: #555;
  stroke-dasharray: 2 1;
  shape-rendering: crispEdges;
}

.cut {
  fill: none;
  stroke: #777;
}

.mini {
  fill: none;
  stroke: #444;
}

.mini-light {
  fill: none;
  stroke: #ddd;
}

.cube-text {
  font-size: 8px;
  font-weight: bold;
  fill: #000;
}

.scroll {
  display: flex;
  align-items: center;
  background: #3d3d3d;
}

.vertical, .layer-scroll {
  flex-direction: column;
  padding: 7px 0;
}

.horizontal {
  padding: 0 6px;
}

.thumb {
  border-radius: 5px;
  background: #808080;
}

.vertical .thumb, .layer-scroll .thumb {
  width: 9px;
}

.horizontal .thumb {
  height: 9px;
}

.v-before { flex: 423; }
.v-thumb { flex: 398; }
.v-after { flex: 304; }
.h-before { flex: 804; }
.h-thumb { flex: 673; }
.h-after { flex: 627; }
.l-before { flex: 322; }
.l-thumb { flex: 77; }
.l-after { flex: 149; }

.arrow {
  border: 5px solid transparent;
}

.arrow.up { border-bottom: 9px solid #808080; border-top: none; }
.arrow.down { border-top: 9px solid #808080; border-bottom: none; }
.arrow.left { border-right: 9px solid #808080; border-left: none; }
.arrow.right { border-left: 9px solid #808080; border-right: none; }

/* right hand panels */
.panels {
  width: 343px;
  display: flex;
  flex-direction: column;
  border-left: 6px solid #333;
  background: #363636;
}

.tabs {
  display: flex;
  align-items: stretch;
  flex: none;
  height: 36px;
  padding: 1px 9px 2px;
  background: #282828;
}

.grip {
  width: 1px;
  height: 10px;
  margin: 12px 12px 0 0;
  background: #777;
}

.tabs button {
  padding: 0 6px;
  color: #a0a0a0;
}

.tabs button.active {
  background: #363636;
  color: #f2f2f2;
}

.tab-menu {
  width: 12px;
  height: 12px;
  margin: 10px 0 0 auto;
}

.colour {
  height: 294px;
  padding: 17px 12px 0 0;
}

.colour-main {
  display: grid;
  grid-template-columns: 76px 185px minmax(0, 1fr);
  height: 221px;
}

.colour-left {
  display: flex;
  flex-direction: column;
  justify-content: space-between;
  padding-left: 16px;
}

.hsl {
  display: grid;
  grid-template-columns: 8px 1fr;
  column-gap: 4px;
  line-height: 17px;
  color: #a8a8a8;
}

.hsl dt {
  justify-self: end;
}

.picker {
  display: flex;
  gap: 1px;
  height: 29px;
  padding-left: 2px;
}

.dot {
  width: 20px;
  height: 20px;
  margin-top: 2px;
  border: 2px solid #4a4a4a;
  border-radius: 50%;
  background: #f00;
}

.dot.dark {
  margin: 0;
  background: #981b1e;
}

.wheel {
  position: relative;
}

.ring {
  height: 185px;
  border-radius: 50%;
  background: conic-gradient(from 90deg, #f00, #ff0, #0f0, #0ff, #00f, #f0f, #f00);
  mask: radial-gradient(circle, transparent 74px, #000 75px);
}

.triangle {
  position: absolute;
  left: 0;
  top: 0;
}

.mix {
  isolation: isolate;
}

.light {
  mix-blend-mode: plus-lighter;
}

.colour-right {
  display: flex;
  flex-direction: column;
  align-items: flex-end;
  justify-content: space-between;
  padding-top: 19px;
}

.palette {
  display: grid;
  grid-template-columns: 17px 17px;
  grid-auto-rows: 17px;
  gap: 1px;
  padding: 1px;
  background: #000;
}

.palette i { background: #fff; }
.palette .black { background: #000; }
.palette .grey { background: #e8e8e8; }

.hex {
  display: flex;
  gap: 3px;
  color: #a0a0a0;
}

.hex input {
  width: 60px;
  height: 21px;
  padding: 0 2px;
  border-radius: 3px;
  background: #1e1e1e;
  color: #eee;
}

.opacity-label {
  display: block;
  height: 23px;
  padding: 4px 0 0 17px;
  color: #707070;
}

.opacity-row {
  display: flex;
  align-items: center;
  height: 24px;
  padding: 0 6px 0 22px;
}

.opacity-row input[type="range"] {
  appearance: none;
  flex: 1;
  min-width: 0;
  height: 11px;
  margin: 0 7px;
  border-radius: 6px;
  background: #292929;
}

.opacity-row input[type="range"]::-webkit-slider-thumb {
  appearance: none;
  width: 15px;
  height: 15px;
  border: 2px solid #999;
  border-radius: 50%;
  background: #292929;
}

.split {
  display: flex;
  gap: 1px;
  height: 23px;
}

.split input {
  width: 54px;
  padding: 0 7px;
  background: #2f2f2f;
  color: #8c8c8c;
}

.split button {
  width: 18px;
  background: #444;
}

.layer-options {
  display: flex;
  align-items: center;
  gap: 5px;
  flex: none;
  height: 37px;
  padding: 0 13px 0 10px;
  color: #707070;
}

.layer-options label {
  width: 45px;
}

.pct { width: 69px; }

.blend { flex: 1; }

.gear {
  margin: 0 11px 0 2px;
}

.layers {
  flex: 1;
  min-height: 0;
  display: flex;
}

.layer-list {
  flex: 1;
  overflow: hidden;
  padding-left: 9px;
  border: 1px solid #000;
  border-bottom: none;
}

.layer-list li {
  display: flex;
  align-items: center;
  height: 46px;
  border-left: 1px solid #000;
  border-bottom: 1px solid #000;
  background: #333;
}

.kind {
  width: 14px;
  height: 14px;
  margin: 0 3px 0 4px;
}

.preview {
  display: flex;
  align-items: center;
  justify-content: center;
  width: 47px;
  height: 45px;
  border: solid #000;
  border-width: 0 1px;
}

.preview::before {
  content: "";
  flex: none;
  width: 41px;
  height: 41px;
  border: solid #000;
  border-width: 0 1px 1px 0;
  background: #282828;
}

.preview svg {
  flex: none;
  width: 41px;
  height: 41px;
  margin-left: -41px;
}

.name {
  flex: 1;
  padding-left: 4px;
  color: #8c8c8c;
  font-size: 14px;
}

.layer-list i {
  width: 12px;
  height: 12px;
  margin-right: 12px;
  border-radius: 50%;
  background: #999;
}

.layer-scroll {
  width: 21px;
  background: #3d3d3d;
}

.layer-actions {
  display: flex;
  align-items: center;
  gap: 9px;
  flex: none;
  height: 32px;
  padding: 0 10px 0 6px;
}

.layer-actions .boxed {
  width: 26px;
  height: 25px;
  background: #242424;
}

.layer-actions .push {
  margin-left: auto;
}

.layer-actions .page {
  margin-left: 28px;
}

.layer-actions .fx {
  height: 18px;
  border: solid #999;
  border-width: 1px 0;
  color: #999;
  font-size: 12px;
  font-weight: bold;
}

.transform {
  display: flex;
  flex: none;
  height: 163px;
  padding: 15px 8px 0 21px;
}

.anchor {
  margin-top: 28px;
}

.fields {
  flex: 1;
  display: grid;
  grid-template-columns: 31px 81px 27px 81px;
  grid-template-rows: 25px 25px 33px 32px;
  row-gap: 5px;
  column-gap: 6px;
  margin-right: 12px;
}

.fields label {
  align-self: center;
  text-align: right;
  color: #707070;
}

.fields input, .fields select {
  min-width: 0;
  width: 100%;
}

.fields .gap {
  margin-top: 8px;
}

.scale-split {
  grid-column: 1 / -1;
  display: flex;
  justify-content: flex-end;
  gap: 1px;
  height: 32px;
  margin-top: 5px;
}

.scale-split button {
  width: 37px;
  border-radius: 3px;
  background: #444;
}

.scale-split .thin {
  width: 18px;
}

.link {
  margin-top: 14px;
}

/* status bar */
.status {
  height: 29px;
  padding: 7px 29px 0;
  border-bottom: 1px solid #2b1d26;
  font-size: 14px;
}

/* print dialog */
.overlay {
  position: fixed;
  inset: 0;
  display: flex;
  align-items: center;
  justify-content: center;
  padding-top: 2px;
}

.dialog {
  width: 800px;
  padding: 0 16px 15px;
  border: 1px solid #222;
  background: #353535;
}

.dialog-title {
  position: relative;
  display: flex;
  align-items: center;
  justify-content: center;
  height: 37px;
  margin: 0 -16px 20px;
  padding: 2px 20px 0 0;
  background: #3c3c3c;
}

.dialog-title h2 {
  font-size: 14px;
  font-weight: normal;
}

.dialog-title button {
  position: absolute;
  right: 13px;
  top: 12px;
}

.box {
  display: flex;
  background: #3d3d3d;
}

.printer-box {
  justify-content: space-between;
  height: 303px;
  margin-bottom: 27px;
  padding: 15px 33px 0 30px;
}

.print-form {
  display: grid;
  grid-template-columns: 79px 248px 94px;
  grid-template-rows: 28px 28px 28px 23px 28px 26px 26px;
  align-items: center;
  align-content: start;
  row-gap: 5px;
  column-gap: 6px;
  padding-top: 5px;
  color: #a8a8a8;
}

.print-form > label, .print-form > .caption {
  grid-column: 1;
  text-align: right;
}

.print-form > select {
  height: 26px;
}

.btn.side {
  width: 94px;
  height: 28px;
}

.dark-input {
  width: 94px;
  height: 28px;
  padding: 0 7px;
  border-radius: 4px;
  background: #1e1e1e;
  color: #eee;
}

.copies, .reverse {
  display: flex;
  align-items: center;
  gap: 6px;
}

.off {
  color: #707070;
}

.reverse {
  padding-left: 168px;
}

.range {
  position: relative;
}

.range select {
  display: block;
  width: 223px;
  background-color: #262626;
}

.range-list {
  position: absolute;
  z-index: 1;
  top: 22px;
  left: -1px;
  width: 225px;
  border: 1px solid #555;
  background: #323232;
  color: #eee;
}

.range-list li {
  height: 28px;
  padding: 6px 5px 0;
}

.range-list .hover {
  background: #2e3b49;
}

.range-list .current {
  background: #4c6b8f;
}

.fit {
  display: flex;
  align-items: center;
  justify-content: space-between;
}

.fit select {
  width: 160px;
}

.paper {
  width: 250px;
  height: 250px;
  background: #fff;
}

.pager {
  display: flex;
  justify-content: center;
  gap: 12px;
  margin-top: 4px;
  color: #a0a0a0;
}

.pager button {
  height: 14px;
}

.pager span {
  width: 42px;
  padding-top: 2px;
  text-align: center;
}

.options-box {
  height: 302px;
  margin-bottom: 20px;
  padding: 15px 32px;
}

.pages {
  display: flex;
  flex-direction: column;
  gap: 5px;
  align-self: flex-start;
  width: 188px;
  padding: 2px 3px 3px 2px;
  border: 1px solid #222;
  background: #333;
  color: #eee;
}

.pages li {
  height: 31px;
  padding: 7px 6px 0;
  border-radius: 3px;
  background: #373737;
}

.pages .current {
  background: #4c6b8f;
}

.layout-form {
  display: grid;
  grid-template-columns: 111px 244px;
  grid-template-rows: 21px 25px 21px 21px;
  align-items: center;
  align-content: start;
  row-gap: 7px;
  column-gap: 5px;
  padding-top: 6px;
  color: #a8a8a8;
}

.layout-form > label {
  text-align: right;
}

.size {
  display: flex;
  align-items: center;
  justify-content: space-between;
}

.size .field {
  width: 94px;
}

.dialog-buttons {
  display: flex;
  justify-content: flex-end;
  gap: 5px;
}

.ok {
  width: 99px;
}

.cancel {
  width: 94px;
}
```
